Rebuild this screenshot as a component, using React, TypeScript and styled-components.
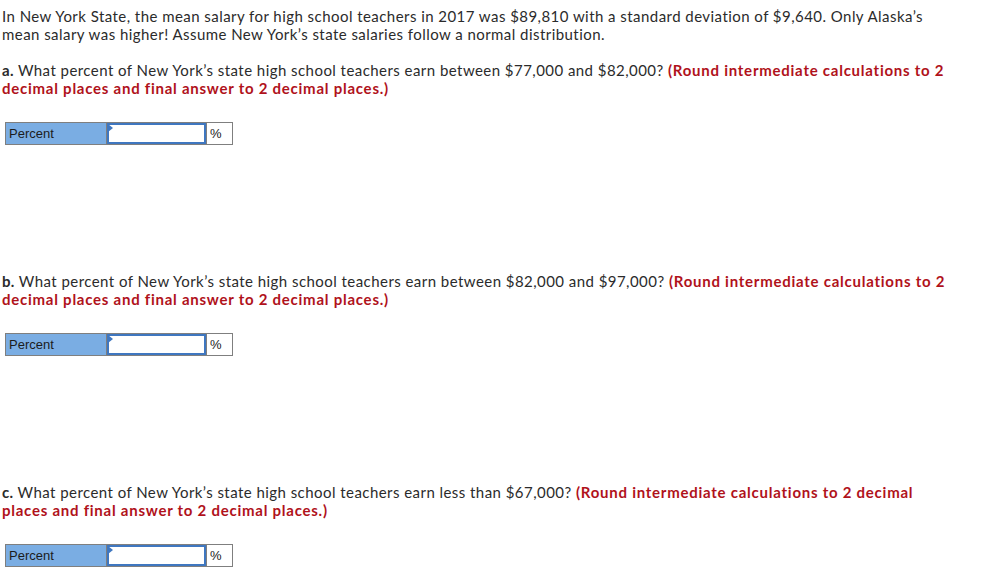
import { createGlobalStyle, styled } from 'styled-components';

const GlobalStyle = createGlobalStyle`
  html, body {
    margin: 0;
    padding: 0;
    background: #ffffff;
  }
`;

const questions = [
  {
    letter: 'a.',
    text: 'What percent of New York’s state high school teachers earn between $77,000 and $82,000?',
  },
  {
    letter: 'b.',
    text: 'What percent of New York’s state high school teachers earn between $82,000 and $97,000?',
  },
  {
    letter: 'c.',
    text: 'What percent of New York’s state high school teachers earn less than $67,000?',
  },
];

const HINT = '(Round intermediate calculations to 2 decimal places and final answer to 2 decimal places.)';

function AnswerRow() {
  return (
    <StyledTable>
      <tbody>
        <tr>
          <StyledLabelCell>Percent</StyledLabelCell>
          <StyledInputCell>
            <StyledInput type="text" />
            <StyledMarker />
          </StyledInputCell>
          <StyledUnitCell>%</StyledUnitCell>
        </tr>
      </tbody>
    </StyledTable>
  );
}

function App() {
  return (
    <StyledPage>
      <GlobalStyle />
      <StyledText>
        In New York State, the mean salary for high school teachers in 2017 was $89,810 with a standard deviation of
        $9,640. Only Alaska’s mean salary was higher! Assume New York’s state salaries follow a normal distribution.
      </StyledText>
      {questions.map(q => (
        <StyledQuestion key={q.letter}>
          <StyledText>
            <StyledLetter>{q.letter}</StyledLetter> {q.text} <StyledHint>{HINT}</StyledHint>
          </StyledText>
          <AnswerRow />
        </StyledQuestion>
      ))}
    </StyledPage>
  );
}

export default App;

const StyledPage = styled.div`
  display: flex;
  flex-direction: column;
  gap: 18px;

  width: 948px;
  padding: 7px 2px 0;

  color: #2b2b2b;
  font-family: 'Lato', 'Liberation Sans', sans-serif;
  font-size: 15px;
  line-height: 18px;
  letter-spacing: 0.45px;
`;

const StyledQuestion = styled.section`
  display: flex;
  flex-direction: column;
  align-items: flex-start;
  gap: 25px;

  & + & {
    margin-top: 109px;
  }
`;

const StyledText = styled.p`
  margin: 0;
`;

const StyledLetter = styled.b`
  font-weight: 700;
  letter-spacing: 0.3px;
`;

const StyledHint = styled.b`
  color: #b0121b;
  font-weight: 700;
  letter-spacing: 0.75px;
`;

const StyledTable = styled.table`
  margin-left: 3px;

  border-collapse: collapse;
  border: 1px solid #7f7f7f;

  font-family: 'Liberation Sans', Arial, sans-serif;
  font-size: 13px;
  line-height: 15px;
  letter-spacing: 0;
`;

const StyledLabelCell = styled.td`
  box-sizing: border-box;
  width: 101px;
  height: 22px;
  padding: 0 3px;

  border: 1px solid #7f7f7f;
  background-color: #7aade3;
  color: #1c1c1c;
`;

const StyledInputCell = styled.td`
  position: relative;

  width: 99px;
  padding: 0;

  border: 1px solid #7f7f7f;
`;

const StyledInput = styled.input`
  display: block;
  box-sizing: border-box;

  width: 99px;
  height: 21px;
  margin: 0;

  border: 2px solid #3f77c0;
  background: #ffffff;
  outline: none;
`;

const StyledMarker = styled.span`
  position: absolute;
  top: 1px;
  left: 1px;

  width: 0;
  height: 0;

  border-top: 4px solid transparent;
  border-bottom: 4px solid transparent;
  border-left: 5px solid #3f77c0;
`;

const StyledUnitCell = styled.td`
  box-sizing: border-box;
  width: 26px;
  padding: 0 3px;

  border: 1px solid #7f7f7f;
  background-color: #ffffff;
  color: #1c1c1c;
`;
